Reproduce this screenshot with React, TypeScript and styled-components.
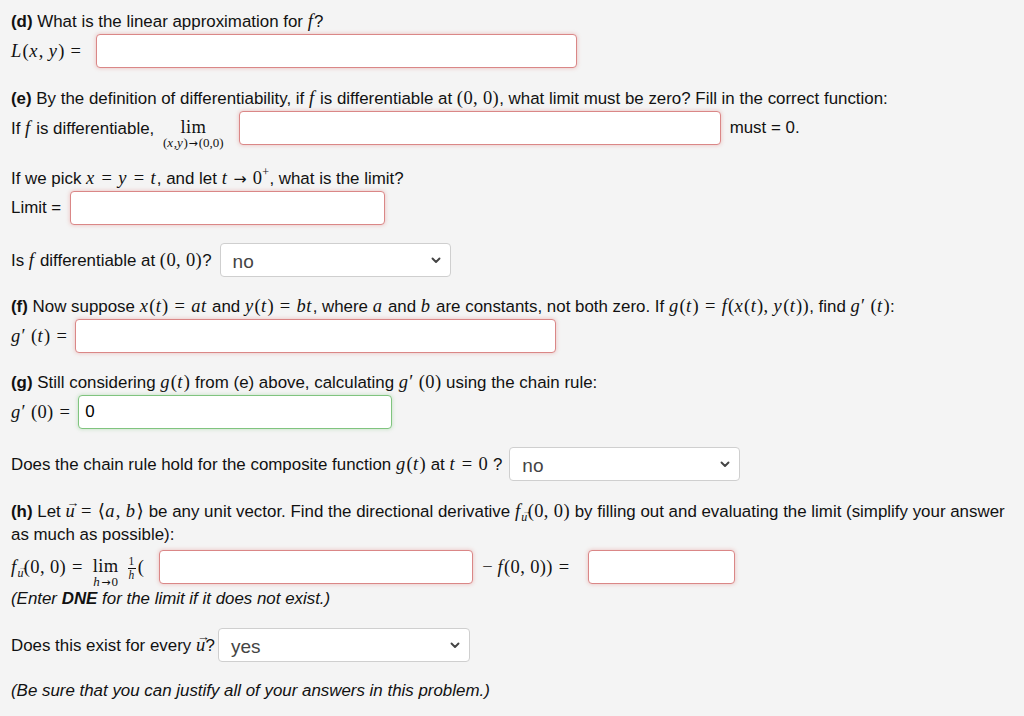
import styled, { createGlobalStyle } from "styled-components";

const Global = createGlobalStyle`
  html, body {
    margin: 0;
    background: #f4f4f4;
  }
  body {
    font-family: "Liberation Sans", Arial, sans-serif;
    font-size: 16.9px;
    color: #111;
  }
`;

const Page = styled.main`
  padding: 9px 11px 12px;
`;

const Section = styled.section<{ $gap?: number }>`
  margin-top: ${(p) => p.$gap ?? 16}px;
`;

const Line = styled.div<{ $italic?: boolean }>`
  height: 24px;
  line-height: 24px;
  white-space: nowrap;
  font-style: ${(p) => (p.$italic ? "italic" : "normal")};
`;

const Row = styled.div<{ $h?: number }>`
  display: flex;
  align-items: center;
  height: ${(p) => p.$h ?? 36}px;
  white-space: nowrap;
`;

const Label = styled.div<{ $ml?: number }>`
  height: 24px;
  line-height: 24px;
  margin-left: ${(p) => p.$ml ?? 0}px;
`;

const B = styled.b`
  font-weight: bold;
`;

const M = styled.span`
  font-family: "Liberation Serif", "DejaVu Serif", serif;
  font-size: 18.5px;
  letter-spacing: 0.02em;
`;

const V = styled.i`
  font-style: italic;
  padding-right: 0.05em;
`;

const Op = styled.span<{ $side?: "both" | "right" }>`
  margin: ${(p) => (p.$side === "right" ? "0 0.25em 0 0" : "0 0.32em")};
`;

const Arrow = styled.span<{ $spaced?: boolean }>`
  font-family: "DejaVu Sans", sans-serif;
  font-size: 0.85em;
  margin: ${(p) => (p.$spaced ? "0 0.35em" : "0 0.08em")};
`;

const Sup = styled.sup`
  font-size: 12px;
  vertical-align: 8px;
  line-height: 0;
`;

const Sub = styled.sub`
  font-size: 12px;
  vertical-align: -4px;
  line-height: 0;
`;

const Vec = styled.span`
  position: relative;
  display: inline-block;
  font-style: italic;
  &::before {
    content: "→";
    position: absolute;
    left: 0.1em;
    top: -0.6em;
    font-size: 0.7em;
    font-style: normal;
  }
`;

const Lim = styled.span`
  display: inline-flex;
  flex-direction: column;
  align-items: center;
  vertical-align: top;
  margin: 3px 4px 0;
`;

const LimWord = styled.span`
  font-size: 18.5px;
  line-height: 17px;
`;

const LimSub = styled.span`
  font-size: 13px;
  line-height: 13px;
  letter-spacing: 0;
`;

const Frac = styled.span`
  display: inline-block;
  vertical-align: -6px;
  font-size: 11.5px;
  line-height: 11px;
  text-align: center;
  margin: 0 2px 0 5px;
`;

const Num = styled.span`
  display: block;
  padding: 0 1px 1px;
  border-bottom: 1px solid #111;
`;

const Den = styled.span`
  display: block;
  padding-top: 1px;
  font-style: italic;
`;

const Answer = styled.input<{ $w: number; $ml?: number; $ok?: boolean }>`
  box-sizing: border-box;
  width: ${(p) => p.$w}px;
  height: 34px;
  margin: 0 0 0 ${(p) => p.$ml ?? 8}px;
  padding: 0 6px;
  border: 1px solid ${(p) => (p.$ok ? "#80c47f" : "#da8787")};
  border-radius: 4px;
  background: #fff;
  box-shadow: 0 0 4px ${(p) => (p.$ok ? "rgba(92,184,92,0.35)" : "rgba(217,83,79,0.35)")};
  font-family: "Liberation Sans", Arial, sans-serif;
  font-size: 16.9px;
  color: #000;
  outline: none;
`;

const Select = styled.div<{ $w: number; $ml?: number }>`
  box-sizing: border-box;
  width: ${(p) => p.$w}px;
  height: 34px;
  margin-left: ${(p) => p.$ml ?? 6}px;
  padding: 3px 9px 0 12px;
  display: flex;
  align-items: center;
  justify-content: space-between;
  border: 1px solid #cfcfcf;
  border-radius: 4px;
  background: #fff;
  font-size: 19px;
  color: #444;
`;

const Chevron = () => (
  <svg width="10" height="7" viewBox="0 0 10 7" style={{ marginTop: -3 }}>
    <polyline points="1.5,1.5 5,5 8.5,1.5" fill="none" stroke="#444" strokeWidth="1.9" strokeLinecap="round" strokeLinejoin="round" />
  </svg>
);

const f = <V>f</V>;
const u = <Vec>u</Vec>;

export default function App() {
  return (
    <>
      <Global />
      <Page>
        <Line>
          <B>(d)</B> What is the linear approximation for <M>{f}</M>?
        </Line>
        <Row>
          <Label>
            <M>
              <V>L</V>(<V>x</V>, <V>y</V>)<Op>=</Op>
            </M>
          </Label>
          <Answer $w={481} $ml={9} readOnly />
        </Row>

        <Section $gap={17}>
          <Line>
            <B>(e)</B> By the definition of differentiability, if <M>{f}</M> is differentiable at <M>(0, 0)</M>, what
            limit must be zero? Fill in the correct function:
          </Line>
          <Row>
            <Label>
              If <M>{f}</M> is differentiable,{" "}
              <M>
                <Lim>
                  <LimWord>lim</LimWord>
                  <LimSub>
                    (<V>x</V>,<V>y</V>)<Arrow>→</Arrow>(0,0)
                  </LimSub>
                </Lim>
              </M>
            </Label>
            <Answer $w={482} $ml={11} readOnly />
            <Label $ml={9}>must = 0.</Label>
          </Row>
        </Section>

        <Section $gap={20}>
          <Line>
            If we pick{" "}
            <M>
              <V>x</V>
              <Op>=</Op>
              <V>y</V>
              <Op>=</Op>
              <V>t</V>
            </M>
            , and let{" "}
            <M>
              <V>t</V>
              <Arrow $spaced>→</Arrow>0<Sup>+</Sup>
            </M>
            , what is the limit?
          </Line>
          <Row>
            <Label>Limit =</Label>
            <Answer $w={315} $ml={9} readOnly />
          </Row>
        </Section>

        <Section>
          <Row>
            <Label>
              Is <M>{f}</M> differentiable at <M>(0, 0)</M>?
            </Label>
            <Select $w={231} $ml={8}>
              <span>no</span>
              <Chevron />
            </Select>
          </Row>
        </Section>

        <Section>
          <Line>
            <B>(f)</B> Now suppose{" "}
            <M>
              <V>x</V>(<V>t</V>)<Op>=</Op>
              <V>at</V>
            </M>{" "}
            and{" "}
            <M>
              <V>y</V>(<V>t</V>)<Op>=</Op>
              <V>bt</V>
            </M>
            , where <M><V>a</V></M> and <M><V>b</V></M> are constants, not both zero. If{" "}
            <M>
              <V>g</V>(<V>t</V>)<Op>=</Op>
              {f}(<V>x</V>(<V>t</V>), <V>y</V>(<V>t</V>))
            </M>
            , find{" "}
            <M>
              <V>g</V>′ (<V>t</V>)
            </M>
            :
          </Line>
          <Row>
            <Label>
              <M>
                <V>g</V>′ (<V>t</V>)<Op>=</Op>
              </M>
            </Label>
            <Answer $w={481} $ml={2} readOnly />
          </Row>
        </Section>

        <Section>
          <Line>
            <B>(g)</B> Still considering{" "}
            <M>
              <V>g</V>(<V>t</V>)
            </M>{" "}
            from (e) above, calculating{" "}
            <M>
              <V>g</V>′ (0)
            </M>{" "}
            using the chain rule:
          </Line>
          <Row>
            <Label>
              <M>
                <V>g</V>′ (0)<Op>=</Op>
              </M>
            </Label>
            <Answer $w={314} $ml={2} $ok readOnly value="0" />
          </Row>
        </Section>

        <Section>
          <Row>
            <Label>
              Does the chain rule hold for the composite function{" "}
              <M>
                <V>g</V>(<V>t</V>)
              </M>{" "}
              at{" "}
              <M>
                <V>t</V>
                <Op>=</Op>0
              </M>{" "}
              ?
            </Label>
            <Select $w={231} $ml={7}>
              <span>no</span>
              <Chevron />
            </Select>
          </Row>
        </Section>

        <Section $gap={17}>
          <Line>
            <B>(h)</B> Let{" "}
            <M>
              {u}
              <Op>=</Op>⟨<V>a</V>, <V>b</V>⟩
            </M>{" "}
            be any unit vector. Find the directional derivative{" "}
            <M>
              {f}
              <Sub>{u}</Sub>(0, 0)
            </M>{" "}
            by filling out and evaluating the limit (simplify your answer
          </Line>
          <Line>as much as possible):</Line>
          <Row $h={40}>
            <Label>
              <M>
                {f}
                <Sub>{u}</Sub>(0, 0)<Op>=</Op>
                <Lim>
                  <LimWord>lim</LimWord>
                  <LimSub>
                    <V>h</V>
                    <Arrow>→</Arrow>0
                  </LimSub>
                </Lim>
                <Frac>
                  <Num>1</Num>
                  <Den>h</Den>
                </Frac>
                (
              </M>
            </Label>
            <Answer $w={314} $ml={15} readOnly />
            <Label $ml={9}>
              <M>
                <Op $side="right">−</Op>
                {f}(0, 0))<Op>=</Op>
              </M>
            </Label>
            <Answer $w={147} $ml={12} readOnly />
          </Row>
          <Line $italic>
            (Enter <B>DNE</B> for the limit if it does not exist.)
          </Line>
        </Section>

        <Section>
          <Row>
            <Label>
              Does this exist for every <M>{u}</M>?
            </Label>
            <Select $w={252} $ml={3}>
              <span>yes</span>
              <Chevron />
            </Select>
          </Row>
        </Section>

        <Section>
          <Line $italic>(Be sure that you can justify all of your answers in this problem.)</Line>
        </Section>
      </Page>
    </>
  );
}
